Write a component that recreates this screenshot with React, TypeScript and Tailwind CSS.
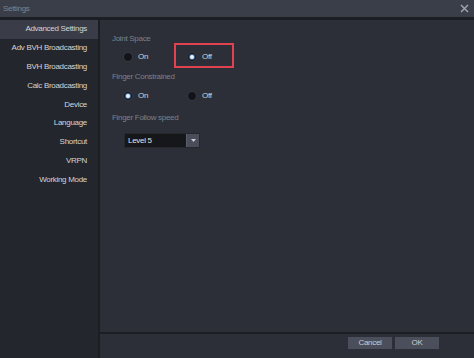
import { ReactNode } from "react";

const menu = [
  "Advanced Settings",
  "Adv BVH Broadcasting",
  "BVH Broadcasting",
  "Calc Broadcasting",
  "Device",
  "Language",
  "Shortcut",
  "VRPN",
  "Working Mode",
];

function Radio({ checked, label, width }: { checked: boolean; label: string; width: string }) {
  return (
    <div className={`flex items-center gap-[5px] ${width}`}>
      <span className="w-[10px] h-[10px] rounded-full bg-[#121418] border border-[#383b43] flex items-center justify-center">
        {checked && (
          <span className="w-[4px] h-[4px] rounded-full bg-[#e8f2fc] shadow-[0_0_0_1px_rgba(90,150,210,0.7)]" />
        )}
      </span>
      <span className="text-[#d2d3d6]">{label}</span>
    </div>
  );
}

function Label({ children }: { children: ReactNode }) {
  return <div className="h-[10px] leading-[10px] text-[#7d818a]">{children}</div>;
}

export default function App() {
  return (
    <div
      className="w-[474px] h-[358px] flex flex-col bg-[#2c2f38] overflow-hidden text-[8px] tracking-[-0.3px]"
      style={{ fontFamily: '"Liberation Sans", Arial, sans-serif' }}
    >
      {/* Title bar */}
      <div className="h-[17px] shrink-0 bg-[#3a3e49] flex items-center justify-between pl-[3px] pr-[5px] border-b-[3px] border-[#1c1e23] box-content">
        <span className="text-[#7f838c]">Settings</span>
        <svg width="9" height="9" viewBox="0 0 9 9" className="text-[#9fa3ab]">
          <path d="M1 1 L8 8 M8 1 L1 8" stroke="currentColor" strokeWidth="1.5" />
        </svg>
      </div>

      <div className="flex flex-1 min-h-0">
        {/* Sidebar */}
        <div className="w-[98px] shrink-0 bg-[#23262c] border-r-2 border-[#1c1e23] box-content flex flex-col">
          {menu.map((item, i) => (
            <div
              key={item}
              className={`h-[18.8px] shrink-0 flex items-center justify-end pr-[11px] text-[#d4d5d8] ${
                i === 0 ? "bg-[#3a3d47]" : ""
              }`}
            >
              {item}
            </div>
          ))}
        </div>

        {/* Main panel */}
        <div className="flex-1 flex flex-col relative">
          <div className="flex-1 flex flex-col pl-[12px] pt-[14px]">
            <Label>Joint Space</Label>
            <div className="mt-[8px] h-[10px] flex items-center pl-[11px]">
              <Radio checked={false} label="On" width="w-[64px]" />
              <Radio checked label="Off" width="w-[40px]" />
            </div>

            <div className="mt-[10px]">
              <Label>Finger Constrained</Label>
            </div>
            <div className="mt-[9px] h-[10px] flex items-center pl-[11px]">
              <Radio checked label="On" width="w-[64px]" />
              <Radio checked={false} label="Off" width="w-[40px]" />
            </div>

            <div className="mt-[12px]">
              <Label>Finger Follow speed</Label>
            </div>
            <div className="mt-[10px] ml-[12px] w-[76px] h-[15px] flex bg-[#15171b] border border-[#25272c]">
              <span className="flex-1 flex items-center pl-[3px] text-[#e2e3e5]">Level 5</span>
              <span className="w-[13px] flex items-center justify-center bg-[#4a4e5a] border-l border-[#5a5e6a]">
                <svg width="5" height="3" viewBox="0 0 5 3">
                  <path d="M0 0 L5 0 L2.5 3 Z" fill="#c9ccd2" />
                </svg>
              </span>
            </div>
          </div>

          {/* Footer */}
          <div className="h-[26px] shrink-0 border-t-2 border-[#1c1e23] flex items-start justify-end gap-[3px] pr-[35px] pt-[3px]">
            <button className="w-[44px] h-[12px] bg-[#4b4f5c] text-[#c9cbd0] flex items-center justify-center">
              Cancel
            </button>
            <button className="w-[44px] h-[12px] bg-[#4b4f5c] text-[#c9cbd0] flex items-center justify-center">
              OK
            </button>
          </div>

          {/* Annotation highlight */}
          <div className="absolute left-[74px] top-[23px] w-[60px] h-[25px] border-2 border-[#e0434f] pointer-events-none" />
        </div>
      </div>
    </div>
  );
}
